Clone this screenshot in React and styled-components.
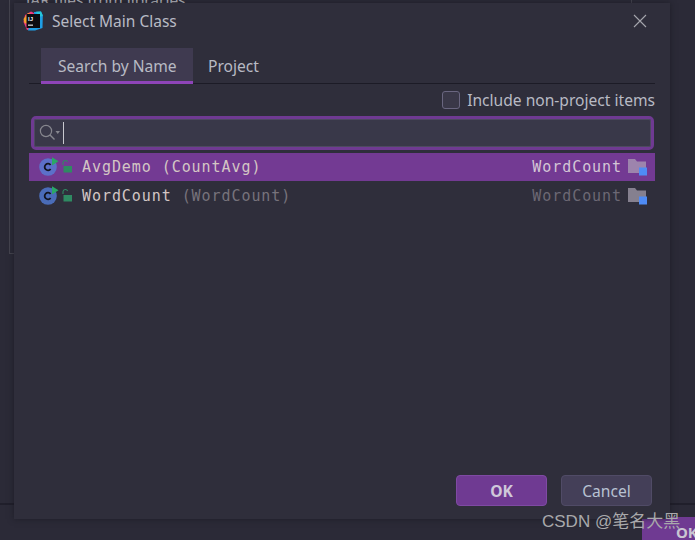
import React from "react";
import styled, { createGlobalStyle } from "styled-components";

const GlobalStyle = createGlobalStyle`
  html, body {
    margin: 0;
    padding: 0;
    background: #2b2a37;
  }
`;

function IdeaLogo() {
  return (
    <LogoSvg viewBox="0 0 20 20" width="20" height="20">
      <path d="M2 4 L8 0.5 L11 2 L9 18 L4 19 L0.5 11 Z" fill="#f0387f" />
      <path d="M0.5 8 L5 2 L8 3 L5 13 L1.5 12 Z" fill="#f7a02c" />
      <path d="M11 1 L18 0.5 L19.8 4 L19.5 17 L12 19.5 L5 19.5 L6 16 L12 12 Z" fill="#1f9fe6" />
      <path d="M13 0.8 L18 0.5 L19.8 5 L15 6 Z" fill="#27c7d8" />
      <rect x="3.5" y="3" width="13.5" height="14" fill="#0c0c10" />
      <text x="5" y="9.6" fontFamily="'Liberation Sans', sans-serif" fontSize="6" fontWeight="700" fill="#f2f2f2">IJ</text>
      <rect x="5" y="13.6" width="5" height="1.1" fill="#f2f2f2" />
    </LogoSvg>
  );
}

function CloseIcon() {
  return (
    <svg viewBox="0 0 14 14" width="14" height="14">
      <path d="M1 1 L13 13 M13 1 L1 13" stroke="#a6a6ad" strokeWidth="1.1" fill="none" />
    </svg>
  );
}

function SearchIcon() {
  return (
    <svg viewBox="0 0 22 18" width="22" height="18">
      <circle cx="7" cy="7" r="5.6" stroke="#86868e" strokeWidth="1.2" fill="none" />
      <path d="M11 11 L15.5 15.5" stroke="#86868e" strokeWidth="1.4" />
      <path d="M16.5 7 L21 7 L18.75 10 Z" fill="#86868e" />
    </svg>
  );
}

function ClassIcon({ $dim }) {
  return (
    <svg viewBox="0 0 34 20" width="34" height="20">
      <circle cx="10" cy="10" r="8.8" fill={$dim ? "#4a6cb8" : "#5c70c9"} />
      <path d="M12.6 8 A3.3 3.3 0 1 0 12.6 12" stroke="#12141f" strokeWidth="1.8" fill="none" />
      <path d="M14 0.3 L20.5 4.3 L14 8.6 Z" fill="#2aa866" />
      <path d="M25 8 V5.5 A2.4 2.4 0 0 1 29.6 5" stroke="#2f8a62" strokeWidth="1.1" fill="none" />
      <rect x="25.5" y="9" width="8.5" height="6.5" fill="#2f8a62" />
    </svg>
  );
}

function ModuleFolder({ $dim }) {
  return (
    <svg viewBox="0 0 20 18" width="20" height="18">
      <path d="M1 1 H8 L10 3.5 H19 V15 H1 Z" fill={$dim ? "#85808f" : "#9d84ad"} />
      <rect x="12" y="9.5" width="8" height="8" fill="#4f8bf5" />
    </svg>
  );
}

export default function App() {
  return (
    <>
      <GlobalStyle />
      <Page>
        <BehindPanel>
          <BehindText>JAR files from libraries</BehindText>
        </BehindPanel>
        <BehindFooter>
          <BehindOk>OK</BehindOk>
        </BehindFooter>

        <Dialog>
          <TitleBar>
            <IdeaLogo />
            <Title>Select Main Class</Title>
            <CloseButton>
              <CloseIcon />
            </CloseButton>
          </TitleBar>

          <Tabs>
            <Tab $active>Search by Name</Tab>
            <Tab>Project</Tab>
          </Tabs>

          <OptionRow>
            <Checkbox />
            <OptionLabel>Include non-project items</OptionLabel>
          </OptionRow>

          <SearchBox>
            <SearchIcon />
            <Caret />
          </SearchBox>

          <ResultList>
            <ResultRow $selected>
              <ClassIcon />
              <ClassName>AvgDemo</ClassName>
              <Qualifier $selected>(CountAvg)</Qualifier>
              <ModuleName $selected>WordCount</ModuleName>
              <ModuleFolder />
            </ResultRow>
            <ResultRow>
              <ClassIcon $dim />
              <ClassName>WordCount</ClassName>
              <Qualifier>(WordCount)</Qualifier>
              <ModuleName>WordCount</ModuleName>
              <ModuleFolder $dim />
            </ResultRow>
          </ResultList>

          <Footer>
            <DialogButton $primary>OK</DialogButton>
            <DialogButton>Cancel</DialogButton>
          </Footer>
        </Dialog>

        <Watermark>CSDN @笔名大黑</Watermark>
      </Page>
    </>
  );
}

const uiFont = `"Noto Sans", "Open Sans", sans-serif`;
const monoFont = `"DejaVu Sans Mono", "Liberation Mono", monospace`;

const Page = styled.div`
  position: relative;
  width: 695px;
  height: 540px;
  overflow: hidden;
  background: #2b2a37;
  font-family: ${uiFont};
`;

const BehindPanel = styled.div`
  box-sizing: border-box;
  width: 623px;
  height: 254px;
  margin-left: 9px;
  border-left: 1px solid #45444f;
  border-right: 1px solid #45444f;
  border-bottom: 1px solid #45444f;
  overflow: hidden;
`;

const BehindText = styled.div`
  margin: -9px 0 0 16px;
  font-size: 15.5px;
  line-height: 18px;
  color: #b4b4bc;
`;

const BehindFooter = styled.div`
  box-sizing: border-box;
  display: flex;
  justify-content: flex-end;
  height: 37px;
  margin-top: 249px;
  padding-top: 12px;
  border-top: 2px solid #201f2b;
`;

const BehindOk = styled.div`
  box-sizing: border-box;
  width: 53px;
  height: 30px;
  padding: 5px 0 0 34px;
  background: #6f3a92;
  font-size: 15px;
  font-weight: 700;
  line-height: 20px;
  color: #c9c5d2;
`;

const Dialog = styled.div`
  position: absolute;
  top: 3px;
  left: 14px;
  box-sizing: border-box;
  display: flex;
  flex-direction: column;
  width: 656px;
  height: 516px;
  background: #2f2e3b;
  box-shadow: 0 0 6px rgba(20, 20, 28, 0.55);
`;

const TitleBar = styled.div`
  display: flex;
  align-items: center;
  height: 36px;
  padding: 0 23px 0 9px;
`;

const LogoSvg = styled.svg`
  flex: none;
`;

const Title = styled.div`
  margin-left: 9px;
  font-size: 15.5px;
  color: #b8bac4;
`;

const CloseButton = styled.div`
  display: flex;
  margin-left: auto;
`;

const Tabs = styled.div`
  display: flex;
  box-sizing: border-box;
  height: 36px;
  margin: 9px 15px 0;
  padding-left: 12px;
  border-bottom: 1px solid #1c1b26;
`;

const Tab = styled.div`
  box-sizing: border-box;
  height: 36px;
  padding: 0 15px;
  font-size: 15.6px;
  line-height: 37px;
  color: #b8bac4;
  ${(p) =>
    p.$active &&
    `
    width: 152px;
    padding-left: 17px;
    background: #3f3a50;
    border-bottom: 3px solid #8e44b8;
  `}
`;

const OptionRow = styled.div`
  display: flex;
  align-items: center;
  justify-content: flex-end;
  height: 18px;
  margin: 7px 15px 0 0;
`;

const Checkbox = styled.div`
  box-sizing: border-box;
  width: 18px;
  height: 18px;
  margin-right: 7px;
  border: 1px solid #6a6680;
  border-radius: 3px;
  background: #3a3848;
`;

const OptionLabel = styled.div`
  font-size: 15.6px;
  color: #b8bac4;
`;

const SearchBox = styled.div`
  box-sizing: border-box;
  display: flex;
  align-items: center;
  gap: 2px;
  height: 34px;
  margin: 7px 16px 0 17px;
  padding-left: 5px;
  background: #393849;
  border: 3px solid #6f3a92;
  border-radius: 5px;
  box-shadow: inset 0 0 0 1px #4d4a60;
`;

const Caret = styled.div`
  width: 1px;
  height: 22px;
  background: #c8c8cf;
`;

const ResultList = styled.div`
  display: flex;
  flex-direction: column;
  margin: 3px 15px 0;
`;

const ResultRow = styled.div`
  display: flex;
  align-items: center;
  box-sizing: border-box;
  height: 28px;
  padding: 0 8px 0 9px;
  font-family: ${monoFont};
  font-size: 15px;
  letter-spacing: 0.93px;
  white-space: pre;
  background: ${(p) => (p.$selected ? "#733a93" : "transparent")};

  & + & {
    margin-top: 1px;
  }
`;

const ClassName = styled.span`
  margin-left: 10px;
  color: #d3c6c4;
`;

const Qualifier = styled.span`
  margin-left: 10px;
  color: ${(p) => (p.$selected ? "#d3c6c4" : "#77737c")};
`;

const ModuleName = styled.span`
  margin: 0 5px 0 auto;
  color: ${(p) => (p.$selected ? "#d3c6d6" : "#6c6874")};
`;

const Footer = styled.div`
  display: flex;
  justify-content: flex-end;
  gap: 14px;
  margin-top: auto;
  padding: 0 18px 13px 0;
`;

const DialogButton = styled.div`
  box-sizing: border-box;
  width: 91px;
  height: 31px;
  border-radius: 4px;
  font-size: 15.6px;
  line-height: 30px;
  text-align: center;
  color: ${(p) => (p.$primary ? "#cfc8da" : "#b8c2d2")};
  font-weight: ${(p) => (p.$primary ? 700 : 400)};
  background: ${(p) => (p.$primary ? "#6f3a92" : "#443f58")};
  border: 1px solid ${(p) => (p.$primary ? "#7f4aa3" : "#504b66")};
`;

const Watermark = styled.div`
  position: absolute;
  top: 511px;
  left: 542px;
  font-family: "Liberation Sans", "Noto Sans CJK SC", sans-serif;
  font-size: 17px;
  line-height: 22px;
  color: #a9a9ab;
  white-space: nowrap;
`;
